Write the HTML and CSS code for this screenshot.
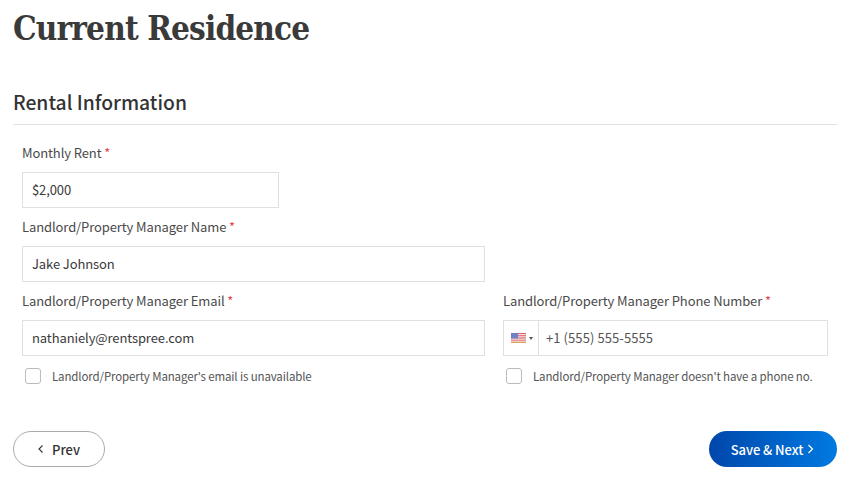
FILE: index.html
```html
<!DOCTYPE html>
<html>
<head>
  <meta charset='UTF-8'>
  <meta name='viewport' content='width=device-width, initial-scale=1.0'>
  <title>Current Residence</title>
  <link rel="stylesheet" href="styles.css">
</head>
<body>
  <div class='page'>
    <h1>Current Residence</h1>
    <h2>Rental Information</h2>

    <div class='fields'>
      <div class='row'>
        <div class='field field-rent'>
          <label>Monthly Rent <span class='req'>*</span></label>
          <div class='input'>$2,000</div>
        </div>
      </div>

      <div class='row'>
        <div class='field field-left'>
          <label>Landlord/Property Manager Name <span class='req'>*</span></label>
          <div class='input'>Jake Johnson</div>
        </div>
      </div>

      <div class='row'>
        <div class='field field-left'>
          <label>Landlord/Property Manager Email <span class='req'>*</span></label>
          <div class='input'>nathaniely@rentspree.com</div>
          <div class='check'><span class='box'></span><span>Landlord/Property Manager's email is unavailable</span></div>
        </div>
        <div class='field field-right'>
          <label>Landlord/Property Manager Phone Number <span class='req'>*</span></label>
          <div class='input input-phone'>
            <div class='country'>
              <svg class='flag' width='15' height='10' viewBox='0 0 15 10'>
                <rect width='15' height='10' fill='#f3f0ee'/>
                <rect width='15' height='1.1' y='0' fill='#d9606a'/>
                <rect width='15' height='1.1' y='2.2' fill='#d9606a'/>
                <rect width='15' height='1.1' y='4.4' fill='#d9606a'/>
                <rect width='15' height='1.1' y='6.6' fill='#e0737a'/>
                <rect width='15' height='1.4' y='8.6' fill='#e2a066'/>
                <rect width='7' height='5.4' fill='#6f82c8'/>
              </svg>
              <span class='caret'></span>
            </div>
            <div class='phone'>+1 (555) 555-5555</div>
          </div>
          <div class='check'><span class='box'></span><span>Landlord/Property Manager doesn't have a phone no.</span></div>
        </div>
      </div>
    </div>

    <div class='actions'>
      <button class='btn btn-prev'>
        <svg width='7' height='10' viewBox='0 0 7 10'><path d='M5.5 1.5 L2 5 L5.5 8.5' fill='none' stroke='#333' stroke-width='1.1'/></svg>
        Prev
      </button>
      <button class='btn btn-next'>
        Save &amp; Next
        <svg width='7' height='10' viewBox='0 0 7 10'><path d='M1.5 1 L5.5 5 L1.5 9' fill='none' stroke='#fff' stroke-width='1.2'/></svg>
      </button>
    </div>
  </div>
</body>
</html>
```

FILE: styles.css
```css
* { margin: 0; padding: 0; box-sizing: border-box; }
body { font-family: "Noto Sans CJK SC", "Noto Sans", sans-serif; background: #fff; color: #333; }
.page { width: 847px; height: 483px; padding: 0 10px 0 13px; overflow: hidden; }
h1 { font-family: "DejaVu Serif Condensed", "DejaVu Serif", serif; font-stretch: condensed; font-size: 33px; font-weight: 700; line-height: 57px; letter-spacing: -0.85px; color: #3a3a3a; }
h2 { font-size: 19.3px; font-weight: 500; line-height: 28px; margin-top: 31px; padding-bottom: 8px; border-bottom: 1px solid #e0e0e0; color: #333; }
.fields { padding: 16px 0 0 9px; }
.row { display: flex; gap: 18px; margin-bottom: 7px; }
.field-rent { width: 257px; }
.field-left { width: 463px; }
.field-right { width: 325px; }
label { display: block; font-size: 13px; letter-spacing: -0.1px; line-height: 24px; margin-bottom: 7px; color: #4a4a4a; }
.req { color: #e5484d; }
.input { height: 36px; border: 1px solid #e0e0e0; padding: 0 9px; font-size: 13px; letter-spacing: -0.1px; line-height: 34px; color: #3a3a3a; }
.input-phone { display: flex; padding: 0; }
.country { width: 35px; flex: none; display: flex; align-items: center; padding-left: 7px; gap: 3px; border-right: 1px solid #e0e0e0; }
.caret { width: 0; height: 0; border-left: 2px solid transparent; border-right: 2px solid transparent; border-top: 3px solid #555; }
.phone { padding-left: 7px; color: #555; letter-spacing: 0.08px; }
.check { display: flex; align-items: center; height: 16px; margin: 12px 0 0 3px; font-size: 11.5px; letter-spacing: -0.13px; color: #555; white-space: nowrap; }
.box { width: 16px; height: 16px; flex: none; margin-right: 11px; border: 1px solid #bbb; border-radius: 3px; background: #fff; }
.actions { display: flex; justify-content: space-between; margin-top: 47px; }
.btn { height: 36px; border-radius: 18px; font-family: inherit; font-size: 13px; font-weight: 500; letter-spacing: -0.05px; display: flex; align-items: center; justify-content: center; cursor: pointer; }
.btn-prev { width: 92px; gap: 8px; padding-right: 1px; border: 1px solid #aaa; background: #fff; color: #333; }
.btn-next { width: 128px; gap: 4px; padding-right: 1px; border: none; background: linear-gradient(90deg, #0047ab, #007ae1); color: #fff; }
```
